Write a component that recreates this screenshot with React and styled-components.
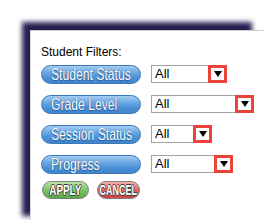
import React from 'react'
import styled, { createGlobalStyle } from 'styled-components'

const GlobalStyle = createGlobalStyle`
    html, body {
        margin: 0;
        padding: 0;
        background: #ffffff;
        overflow: hidden;
    }
`

const Page = styled.div`
    width: 264px;
    height: 220px;
    padding: 30px 0 0 30px;
    box-sizing: border-box;
    overflow: hidden;
`

const Panel = styled.div`
    width: 236px;
    height: 200px;
    box-sizing: border-box;
    background: #ffffff;
    border-top: 1px solid #cfcfcf;
    border-left: 1px solid #d8d8d8;
    box-shadow: -11px -11px 5px -3px #251f50;
    padding: 14px 0 0 10px;
`

const Title = styled.div`
    font-family: "Liberation Sans", Arial, sans-serif;
    font-size: 12px;
    line-height: 14px;
    color: #000000;
    margin-bottom: 6px;
`

const Filters = styled.div`
    display: grid;
    grid-template-columns: 100px auto;
    column-gap: 10px;
    row-gap: 11px;
    align-items: start;
    justify-items: start;
`

// the original uses a condensed face, squeeze Liberation Sans instead
const Narrow = styled.span`
    display: inline-block;
    white-space: nowrap;
    transform: scaleX(${({ scale }) => scale});
    transform-origin: ${({ origin }) => origin || 'left'} center;
`

const Pill = styled.div`
    width: 100px;
    height: 19px;
    box-sizing: border-box;
    border-radius: 10px;
    border: 1px solid #3c78b8;
    background: linear-gradient(to bottom, #a4cdf2 0%, #6aa6e2 40%, #4a8fd6 70%, #3f85cf 100%);
    color: #ffffff;
    font-family: "Liberation Sans", Arial, sans-serif;
    font-size: 16px;
    line-height: 17px;
    padding-left: 9px;
    white-space: nowrap;
    overflow: hidden;
    text-shadow: 0 0 1px #1d4f86, 0 1px 1px #2a5f99;
`

const Select = styled.div`
    position: relative;
    width: ${({ width }) => width}px;
    height: 18px;
    box-sizing: border-box;
    border: 1px solid #a3a3a3;
    background: #ffffff;
    font-family: "Liberation Sans", Arial, sans-serif;
    font-size: 13px;
    line-height: 16px;
    padding-left: 3px;
    color: #000000;
`

const Arrow = styled.div`
    position: absolute;
    top: -1px;
    right: -1px;
    width: 19px;
    height: 18px;
    box-sizing: border-box;
    border: 3px solid #ec4338;
    background: #ffffff;
    display: flex;
    align-items: center;
    justify-content: center;

    &::after {
        content: "";
        border-left: 4px solid transparent;
        border-right: 4px solid transparent;
        border-top: 6px solid #000000;
    }
`

const Buttons = styled.div`
    display: flex;
    gap: 8px;
    margin: 7px 0 0 1px;
`

const Button = styled.div`
    width: ${({ width }) => width}px;
    height: 18px;
    box-sizing: border-box;
    border-radius: 9px;
    border: 1px solid #7f7f7f;
    background: ${({ tone }) => tone === 'green'
        ? 'linear-gradient(to bottom, #bfe6a8 0%, #82c76a 45%, #58a847 100%)'
        : 'linear-gradient(to bottom, #f7b0b0 0%, #e86a6a 45%, #cf4545 100%)'};
    color: #ffffff;
    font-family: "Liberation Sans", Arial, sans-serif;
    font-weight: bold;
    font-size: 15px;
    line-height: 16px;
    display: flex;
    justify-content: center;
    overflow: hidden;
    text-shadow: -1px 0 #3a3a3a, 1px 0 #3a3a3a, 0 -1px #3a3a3a, 0 1px #3a3a3a;
`

const filters = [
    { label: 'Student Status', width: 76 },
    { label: 'Grade Level', width: 103 },
    { label: 'Session Status', width: 61 },
    { label: 'Progress', width: 82 },
]

const App = () => (
    <Page>
        <GlobalStyle />
        <Panel>
            <Title>Student Filters:</Title>
            <Filters>
                {filters.map(f => (
                    <React.Fragment key={f.label}>
                        <Pill><Narrow scale={0.76}>{f.label}</Narrow></Pill>
                        <Select width={f.width}>
                            All
                            <Arrow />
                        </Select>
                    </React.Fragment>
                ))}
            </Filters>
            <Buttons>
                <Button tone="green" width={47}><Narrow scale={0.66} origin="center">APPLY</Narrow></Button>
                <Button tone="red" width={43}><Narrow scale={0.6} origin="center">CANCEL</Narrow></Button>
            </Buttons>
        </Panel>
    </Page>
)

export default App
